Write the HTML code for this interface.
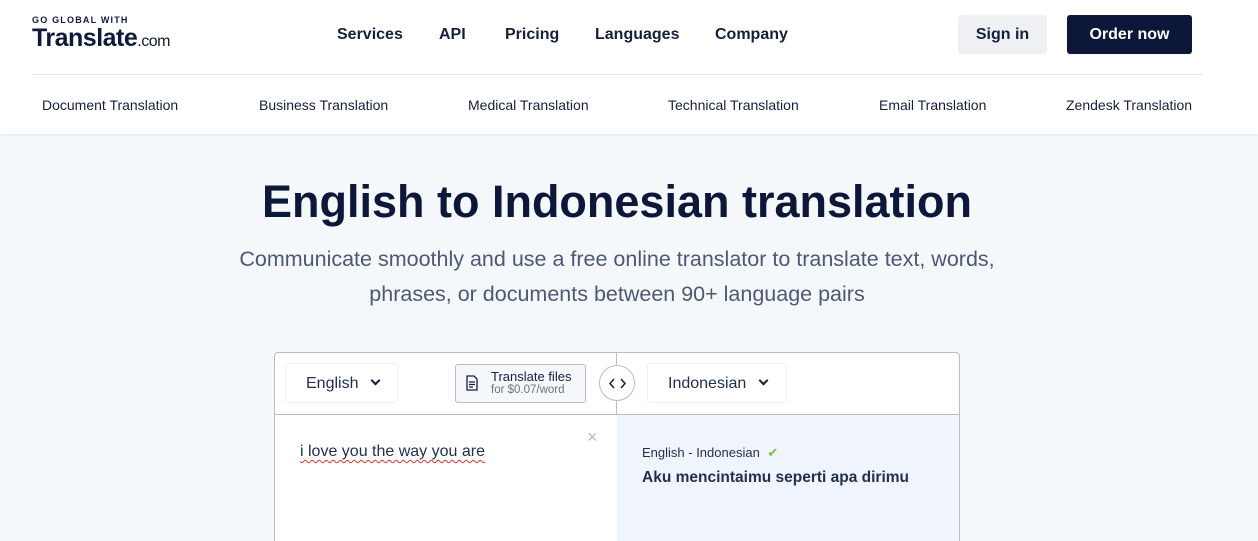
<!DOCTYPE html><html><head><style>
*{margin:0;padding:0;box-sizing:border-box}
html,body{width:1258px;height:541px;overflow:hidden}
body{background:#f5f8fb;font-family:"Liberation Sans",Arial,sans-serif;color:#0e1a3b;position:relative}
.hdr{position:absolute;left:0;top:0;width:1258px;height:134px;background:#fff;box-shadow:0 1px 3px rgba(0,0,0,.08)}
.abs{position:absolute;white-space:nowrap}
.nav{top:26px;font-size:16px;font-weight:bold;color:#15203f}
.sub{top:97px;font-size:14px;color:#15203f}
.wrap{position:absolute;left:274px;top:352px;width:686px;height:189px;border:1px solid #b5bdd0;border-bottom:none;border-radius:4px 4px 0 0;background:#fff;overflow:hidden}
.chev{display:inline-block;width:7px;height:7px;border-right:2px solid #15203f;border-bottom:2px solid #15203f;transform:rotate(45deg);margin-left:14px;vertical-align:4px}
</style></head><body>
<div class="hdr">
<div class="abs" style="left:32px;top:15px;font-size:9px;font-weight:bold;letter-spacing:1.2px">GO GLOBAL WITH</div>
<div class="abs" style="left:32px;top:24px;font-size:25px;font-weight:bold;letter-spacing:-0.5px">Translate<span style="font-size:16px;font-weight:normal">.com</span></div>
<div class="abs nav" style="left:337px">Services</div>
<div class="abs nav" style="left:439px">API</div>
<div class="abs nav" style="left:505px">Pricing</div>
<div class="abs nav" style="left:595px">Languages</div>
<div class="abs nav" style="left:715px">Company</div>
<div class="abs" style="left:958px;top:15px;width:89px;height:39px;background:#eef0f3;border-radius:3px;font-size:16px;font-weight:bold;text-align:center;line-height:39px;color:#15203f">Sign in</div>
<div class="abs" style="left:1067px;top:15px;width:125px;height:39px;background:#0c1739;border-radius:3px;font-size:16px;font-weight:bold;text-align:center;line-height:39px;color:#fff">Order now</div>
<div class="abs" style="left:32px;top:74px;width:1170px;height:1px;background:#e3e6eb"></div>
<div class="abs sub" style="left:42px">Document Translation</div>
<div class="abs sub" style="left:259px">Business Translation</div>
<div class="abs sub" style="left:468px">Medical Translation</div>
<div class="abs sub" style="left:668px">Technical Translation</div>
<div class="abs sub" style="left:879px">Email Translation</div>
<div class="abs sub" style="left:1066px">Zendesk Translation</div>
</div>
<div class="abs" style="left:0;width:1234px;top:176px;text-align:center;font-size:45px;font-weight:bold;color:#0c1739">English to Indonesian translation</div>
<div class="abs" style="left:227px;width:780px;top:242px;text-align:center;font-size:21.5px;line-height:35px;color:#4d5874;white-space:normal">Communicate smoothly and use a free online translator to translate text, words, phrases, or documents between 90+ language pairs</div>
<div class="wrap">
<div class="abs" style="left:341px;top:0;width:1px;height:62px;background:#b5bdd0"></div>
<div class="abs" style="left:0;top:61px;width:686px;height:1px;background:#b5bdd0"></div>
<div class="abs" style="left:342px;top:62px;width:343px;height:127px;background:#f0f4fd"></div>
<div class="abs" style="left:10px;top:10px;width:113px;height:40px;border:1px solid #f0f1f4;border-radius:3px;font-size:16px;line-height:40px;padding-left:20px;color:#23304d">English<span class="chev"></span></div>
<div class="abs" style="left:180px;top:11px;width:131px;height:39px;background:#f5f7fa;border:1px solid #b5bdd0;border-radius:3px">
<svg class="abs" style="left:10px;top:10px" width="12" height="16" viewBox="0 0 12 16"><path d="M1 1h7l3 3v11H1z M3 7h6 M3 9.5h6 M3 12h4" fill="none" stroke="#15203f" stroke-width="1.3"/></svg>
<div class="abs" style="left:35px;top:4px;font-size:13px;color:#15203f">Translate files</div>
<div class="abs" style="left:35px;top:19px;font-size:11.5px;color:#6b7488">for $0.07/word</div></div>
<div class="abs" style="left:324px;top:12px;width:36px;height:36px;border:1px solid #b5bdd0;border-radius:50%;background:#fff">
<svg class="abs" style="left:9px;top:12px" width="17" height="11" viewBox="0 0 17 11"><path d="M5 1L1 5.5 5 10M12 1l4 4.5-4 4.5" fill="none" stroke="#15203f" stroke-width="1.5"/></svg></div>
<div class="abs" style="left:372px;top:10px;width:140px;height:40px;border:1px solid #f0f1f4;border-radius:3px;font-size:16px;line-height:40px;padding-left:20px;color:#23304d">Indonesian<span class="chev"></span></div>
<div class="abs" style="left:25px;top:90px;font-size:16px;color:#23304d;text-decoration:underline wavy #e03030;text-underline-offset:3px;text-decoration-thickness:1px">i love you the way you are</div>
<div class="abs" style="left:312px;top:74px;font-size:18px;color:#bbb">×</div>
<div class="abs" style="left:367px;top:92px;font-size:13px;color:#23304d">English - Indonesian <span style="color:#7cc13a;margin-left:4px">✔</span></div>
<div class="abs" style="left:367px;top:116px;font-size:15.5px;font-weight:bold;color:#23304d">Aku mencintaimu seperti apa dirimu</div>
</div>
</body></html>
